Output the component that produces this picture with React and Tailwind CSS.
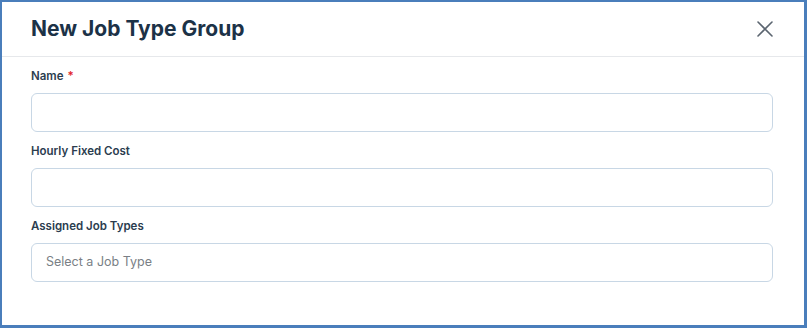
import React from "react";

const Field = ({ label, required, placeholder }) => (
    <div className="flex flex-col">
        <label className="text-[11.5px] leading-[16px] font-semibold text-[#2b3d4f] mb-[9px]">
            {label}
            {required && <span className="text-[#e11d2a] ml-[4px]">*</span>}
        </label>
        <div className="h-[39px] rounded-[6px] border border-[#c8d7e5] bg-white flex items-center px-[14px]">
            {placeholder && <span className="text-[12.5px] text-[#7a7f86]">{placeholder}</span>}
        </div>
    </div>
);

const App = () => {
    return (
        <div
            className="w-[807px] h-[328px] bg-white border-l-2 border-t-2 border-r-[3px] border-b-[3px] border-[#4a7ebb] flex flex-col"
            style={{ fontFamily: "Inter, 'Noto Sans', sans-serif" }}
        >
            {/* Header */}
            <div className="h-[55px] flex items-center justify-between pl-[29px] pr-[31px] border-b border-[#e6e8eb]">
                <h1 className="text-[21px] font-bold text-[#1c3247]">New Job Type Group</h1>
                <button className="w-[16px] h-[16px] flex items-center justify-center">
                    <svg width="16" height="16" viewBox="0 0 16 16" fill="none" stroke="#5b6570" strokeWidth="1.6" strokeLinecap="round">
                        <path d="M1 1 L15 15 M15 1 L1 15" />
                    </svg>
                </button>
            </div>

            {/* Body */}
            <div className="flex flex-col gap-[11px] pl-[29px] pr-[31px] pt-[11px]">
                <Field label="Name" required />
                <Field label="Hourly Fixed Cost" />
                <Field label="Assigned Job Types" placeholder="Select a Job Type" />
            </div>
        </div>
    );
};

export default App;
